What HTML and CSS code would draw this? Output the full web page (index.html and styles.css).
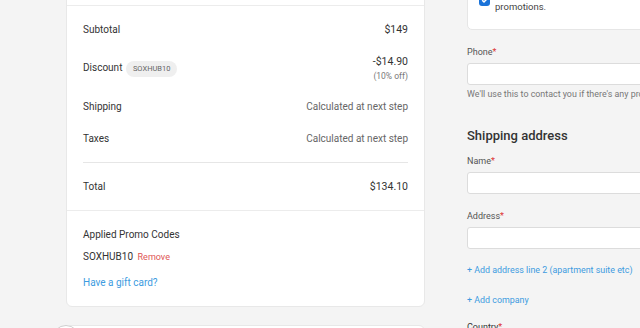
FILE: index.html
```html
<!DOCTYPE html>
<html lang="en">
<head>
    <meta charset="UTF-8">
    <title>Checkout</title>
    <link rel="stylesheet" href="styles.css">
</head>
<body>

<div class="checkout">
    <div class="summary-col">
        <div class="card">
            <div class="card-section items"></div>

            <div class="card-section totals">
                <div class="row">
                    <span>Subtotal</span>
                    <span class="value num">$149</span>
                </div>
                <div class="row">
                    <span>Discount <span class="pill">SOXHUB10</span></span>
                    <span class="value stacked">
                        <span class="num">-$14.90</span>
                        <small>(10% off)</small>
                    </span>
                </div>
                <div class="row">
                    <span>Shipping</span>
                    <span class="value muted">Calculated at next step</span>
                </div>
                <div class="row">
                    <span>Taxes</span>
                    <span class="value muted">Calculated at next step</span>
                </div>
                <hr class="divider">
                <div class="row">
                    <span>Total</span>
                    <span class="value num">$134.10</span>
                </div>
            </div>

            <div class="card-section promo">
                <div class="promo-title">Applied Promo Codes</div>
                <div class="promo-code">SOXHUB10 <a href="#" class="remove">Remove</a></div>
                <a href="#" class="gift">Have a gift card?</a>
            </div>
        </div>

        <div class="card step-card">
            <span class="step-dot"></span>
        </div>
    </div>

    <div class="form-col">
        <div class="opt-in">
            <span class="checkbox">
                <svg width="8" height="8" viewBox="0 0 8 8"><path d="M1.2 4.2l1.8 1.8 3.8-4" fill="none" stroke="#fff" stroke-width="1.5"/></svg>
            </span>
            <span>Email me with news, exclusive offers and<br>promotions.</span>
        </div>

        <label class="label phone-label">Phone<span class="req">*</span></label>
        <div class="input"></div>
        <p class="hint">We'll use this to contact you if there's any problem with your order.</p>

        <h3>Shipping address</h3>

        <label class="label">Name<span class="req">*</span></label>
        <div class="input"></div>

        <label class="label addr-label">Address<span class="req">*</span></label>
        <div class="input"></div>

        <a href="#" class="add-link first">+ Add address line 2 (apartment suite etc)</a>
        <a href="#" class="add-link">+ Add company</a>

        <label class="label country-label">Country<span class="req">*</span></label>
    </div>
</div>

</body>
</html>
```

FILE: styles.css
```css
body {
    margin: 0;
    background: #f4f4f4;
    font-family: Roboto, "Noto Sans", sans-serif;
    font-size: 10px;
    color: #333;
    overflow: hidden;
}
.checkout {
    display: grid;
    grid-template-columns: 359px 300px;
    column-gap: 42px;
    padding-left: 66px;
    margin-top: -20px;
}
.card {
    background: #fff;
    border: 1px solid #e8e8e8;
    border-radius: 6px;
}
.card-section {
    border-top: 1px solid #ececec;
    padding: 0 16px;
}
.card-section:first-child {
    border-top: none;
}
.items {
    height: 24px;
}
.totals {
    padding-top: 8px;
    padding-bottom: 7px;
}
.row {
    display: flex;
    justify-content: space-between;
    align-items: center;
    padding: 8px 0;
    line-height: 16px;
}
.value {
    text-align: right;
}
.num {
    font-size: 10.5px;
}
.muted {
    color: #666;
}
.stacked {
    display: flex;
    flex-direction: column;
    align-items: flex-end;
}
.stacked small {
    font-size: 8.5px;
    color: #777;
    line-height: 13px;
}
.pill {
    display: inline-block;
    margin-left: 1px;
    padding: 0 7px;
    background: #efefef;
    border-radius: 8px;
    font-size: 7.5px;
    line-height: 16px;
    color: #666;
    vertical-align: middle;
}
.divider {
    border: none;
    border-top: 1px solid #e6e6e6;
    margin: 7px 0 8px;
}
.promo {
    padding-top: 16px;
    padding-bottom: 15px;
    line-height: 16px;
}
.promo-title {
    color: #333;
}
.promo-code {
    margin-top: 6px;
}
.remove {
    color: #e05555;
    font-size: 9px;
    text-decoration: none;
    margin-left: 2px;
}
.gift {
    display: block;
    margin-top: 10px;
    color: #3d9be0;
    text-decoration: none;
}
.step-card {
    position: relative;
    margin-top: 18px;
    height: 40px;
}
.step-dot {
    position: absolute;
    left: -15px;
    top: -1px;
    width: 26px;
    height: 26px;
    border-radius: 50%;
    background: #fff;
    border: 1px solid #cfcfcf;
}

.form-col {
    display: flex;
    flex-direction: column;
    align-items: flex-start;
}
.opt-in {
    box-sizing: border-box;
    width: 100%;
    display: flex;
    align-items: center;
    gap: 5px;
    background: #fff;
    border: 1px solid #e6e6e6;
    border-radius: 5px;
    padding: 5px 11px 15px;
    line-height: 14px;
    font-size: 9.5px;
    color: #444;
}
.checkbox {
    flex: none;
    display: flex;
    align-items: center;
    justify-content: center;
    width: 11px;
    height: 11px;
    border-radius: 3px;
    background: #1a73d9;
}
.label {
    display: block;
    font-size: 9px;
    line-height: 13px;
    color: #555;
}
.req {
    color: #d33;
}
.phone-label {
    margin-top: 16px;
}
.input {
    box-sizing: border-box;
    width: 100%;
    height: 22px;
    margin-top: 4px;
    background: #fff;
    border: 1px solid #dcdcdc;
    border-radius: 3px;
}
.hint {
    margin: 3px 0 0;
    font-size: 8.9px;
    line-height: 13px;
    color: #777;
    white-space: nowrap;
}
h3 {
    margin: 25px 0 0;
    font-size: 13px;
    font-weight: 500;
    line-height: 20px;
    color: #333;
}
h3 + .label {
    margin-top: 9px;
}
.addr-label {
    margin-top: 16px;
}
.add-link {
    display: block;
    font-size: 8.9px;
    line-height: 14px;
    color: #3d9be0;
    text-decoration: none;
    margin-top: 16px;
}
.add-link.first {
    margin-top: 14px;
}
.country-label {
    margin-top: 14px;
    color: #333;
}
```
